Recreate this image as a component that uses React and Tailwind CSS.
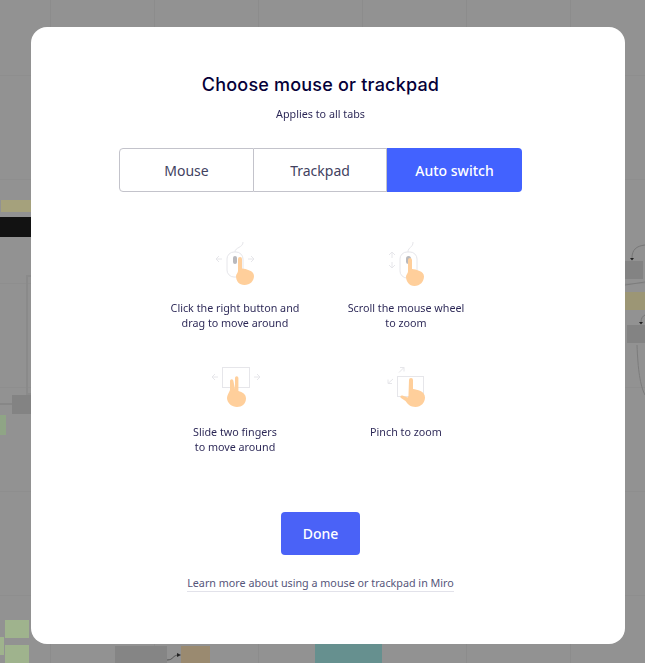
const BODY = { fontFamily: '"Noto Sans", "Open Sans", sans-serif' };
const HAND = "#ffcf9b";
const LINE = "#e6e6ea";

const Svg = ({ children }) => (
  <svg width="60" height="50" viewBox="0 0 60 50" fill="none" className="block">
    {children}
  </svg>
);

const MouseIcon = () => (
  <Svg>
    <path d="M30 14C30 9 38 10 38 4" stroke={LINE} strokeWidth="1" />
    <rect x="22" y="14" width="16" height="25" rx="7" stroke={LINE} strokeWidth="1" />
    <rect x="28" y="18" width="4" height="8" rx="2" fill="#b9b9bd" />
    <path d="M11 21H17M11 21l3-3M11 21l3 3M49 21H43M49 21l-3-3M49 21l-3 3" stroke={LINE} strokeWidth="1" />
    <path d="M33 21a2 2 0 0 1 4 0v9.500c4 .5 12 2 12 7.500 0 5-4 9-9.500 9S31 43 31 38c0-2 2-3 2-5Z" fill={HAND} />
  </Svg>
);

const WheelIcon = () => (
  <Svg>
    <path d="M32 14C32 9 37 10 37 4" stroke={LINE} strokeWidth="1" />
    <rect x="24" y="14" width="17" height="26" rx="7" stroke={LINE} strokeWidth="1" />
    <rect x="30" y="18" width="5" height="8" rx="2.500" fill="#b9b9bd" />
    <path d="M16 14V20M16 14l-3 3M16 14l3 3M16 30V24M16 30l-3-3M16 30l3-3" stroke={LINE} strokeWidth="1" />
    <path d="M32 22a2 2 0 0 1 4 0v9c4 .5 12 2 12 7.500 0 5-4 9.500-9.500 9.500S30 43 30 38.500c0-2 2-3 2-5Z" fill={HAND} />
  </Svg>
);

const SlideIcon = () => (
  <Svg>
    <rect x="17.500" y="3.500" width="27" height="20" stroke={LINE} strokeWidth="1" />
    <path d="M7 13H13M7 13l3-3M7 13l3 3M55 13H49M55 13l-3-3M55 13l-3 3" stroke={LINE} strokeWidth="1" />
    <path d="M25 17a1.700 1.700 0 0 1 3.400 0l1.600 8V14a1.700 1.700 0 0 1 3.400 0v13c4 1 7.600 3 7.600 7.500 0 5-4 8.500-9 8.500s-10-4-10-9c0-3 2-5 3-8Z" fill={HAND} />
  </Svg>
);

const PinchIcon = () => (
  <Svg>
    <rect x="21.500" y="12.500" width="26" height="20" stroke={LINE} strokeWidth="1" />
    <path d="M23 8.500L28 3.500M24 3.500H28V7.500M17 15L12 19.500M12 15.500V19.500H16" stroke={LINE} strokeWidth="1" />
    <path d="M33 16a2 2 0 0 1 4 0v9c4 .5 12 2 12 8.500 0 5-4 9.500-9.500 9.500-5 0-8-3-10-6l-4.500-3c-1.500-1-.5-3 1.500-2.500l5 2c1-1 1-1.500 1-3Z" fill={HAND} />
  </Svg>
);

const tips = [
  { icon: <MouseIcon />, lines: ["Click the right button and", "drag to move around"], gap: "mt-[13px]" },
  { icon: <WheelIcon />, lines: ["Scroll the mouse wheel", "to zoom"], gap: "mt-[13px]" },
  { icon: <SlideIcon />, lines: ["Slide two fingers", "to move around"], gap: "mt-[11px]" },
  { icon: <PinchIcon />, lines: ["Pinch to zoom"], gap: "mt-[11px]" },
];

// blurred board content behind the dialog
const boardItems = [
  "left-[1px] top-[200px] w-[40px] h-[12px] bg-[#a5a17c]",
  "left-0 top-[217px] w-[40px] h-[20px] bg-[#121212]",
  "left-[26px] top-[275px] w-[20px] h-[120px] border-2 border-[#8a8a8a]",
  "left-[12px] top-[395px] w-[30px] h-[19px] bg-[#838383]",
  "left-0 top-[415px] w-[6px] h-[20px] bg-[#8fa585]",
  "left-[5px] top-[620px] w-[24px] h-[18px] bg-[#9fb38d]",
  "left-[5px] top-[645px] w-[24px] h-[18px] bg-[#9fb38d]",
  "left-0 top-[637px] w-[4px] h-[18px] bg-[#9fb38d]",
  "left-[115px] top-[646px] w-[52px] h-[17px] bg-[#858585]",
  "left-[181px] top-[646px] w-[29px] h-[17px] bg-[#9a8a70]",
  "left-[315px] top-[630px] w-[67px] h-[33px] bg-[#66908f]",
  "left-[610px] top-[261px] w-[33px] h-[18px] bg-[#838383]",
  "left-[610px] top-[292px] w-[35px] h-[18px] bg-[#9c9675]",
  "left-[627px] top-[325px] w-[18px] h-[18px] bg-[#838383]",
];

const Connectors = () => (
  <svg width="645" height="663" viewBox="0 0 645 663" fill="none" className="absolute inset-0 blur-[0.4px]">
    <path d="M0 404H12" stroke="#7c7c7c" />
    <path d="M167 660C174 660 172 655 179 655" stroke="#555" />
    <path d="M632 258C632 250 636 246 645 245" stroke="#777" />
    <path d="M625 285L645 282" stroke="#7c7c7c" />
    <path d="M641 322C641 318 643 316 645 315" stroke="#777" />
    <path d="M637 345C638 370 640 385 645 395" stroke="#7c7c7c" />
    <path d="M630 258h4l-2 2.500ZM639 322h4l-2 2.500Z" fill="#222" />
    <path d="M177 653l4 2-4 2Z" fill="#222" />
  </svg>
);

export default function App() {
  return (
    <div
      className="relative h-[663px] w-full overflow-hidden bg-[#929292] bg-[linear-gradient(#8e8e8e_1px,transparent_1px),linear-gradient(90deg,#8c8c8c_1px,transparent_1px)] bg-[size:104px_104px] bg-[position:50px_75px] pt-[27px] pl-[31px]"
      style={BODY}
    >
      {boardItems.map((cls) => (
        <div key={cls} className={`absolute blur-[0.5px] ${cls}`} />
      ))}
      <Connectors />

      <div className="relative flex h-[617px] w-[594px] flex-col items-center rounded-2xl bg-white pr-[15px] text-[#050038]">
        <h1
          className="mt-[45px] text-[18px] leading-[26px] font-medium tracking-[0.2px]"
          style={{ fontFamily: 'Inter, "Noto Sans", sans-serif' }}
        >
          Choose mouse or trackpad
        </h1>
        <p className="mt-[8px] text-[10.750px] leading-[16px] opacity-85">Applies to all tabs</p>

        <div className="mt-[26px] flex h-[44px] w-[403px] text-[14px]">
          <div className="flex w-[135px] items-center justify-center rounded-l border border-[#c3c3cb] text-[#42425f]">
            Mouse
          </div>
          <div className="flex w-[133px] items-center justify-center border-y border-r border-[#c3c3cb] text-[#42425f]">
            Trackpad
          </div>
          <div className="flex w-[135px] items-center justify-center rounded-r bg-[#4262ff] font-medium text-white">
            Auto switch
          </div>
        </div>

        <div className="mt-[46px] grid w-[342px] grid-cols-2 gap-y-[30px]">
          {tips.map((tip) => (
            <div key={tip.lines[0]} className="flex h-[96px] flex-col items-center">
              {tip.icon}
              <p className={`${tip.gap} text-center text-[10.750px] leading-[15px] opacity-85`}>
                {tip.lines.map((l) => (
                  <span key={l} className="block">{l}</span>
                ))}
              </p>
            </div>
          ))}
        </div>

        <button className="mt-[52px] h-[43px] w-[79px] rounded bg-[#4a62f7] text-[14px] font-medium text-white">
          Done
        </button>
        <a className="mt-[21px] border-b border-[#e2e2ea] text-[10.750px] leading-[15px] text-[#56567a]">
          Learn more about using a mouse or trackpad in Miro
        </a>
      </div>
    </div>
  );
}
